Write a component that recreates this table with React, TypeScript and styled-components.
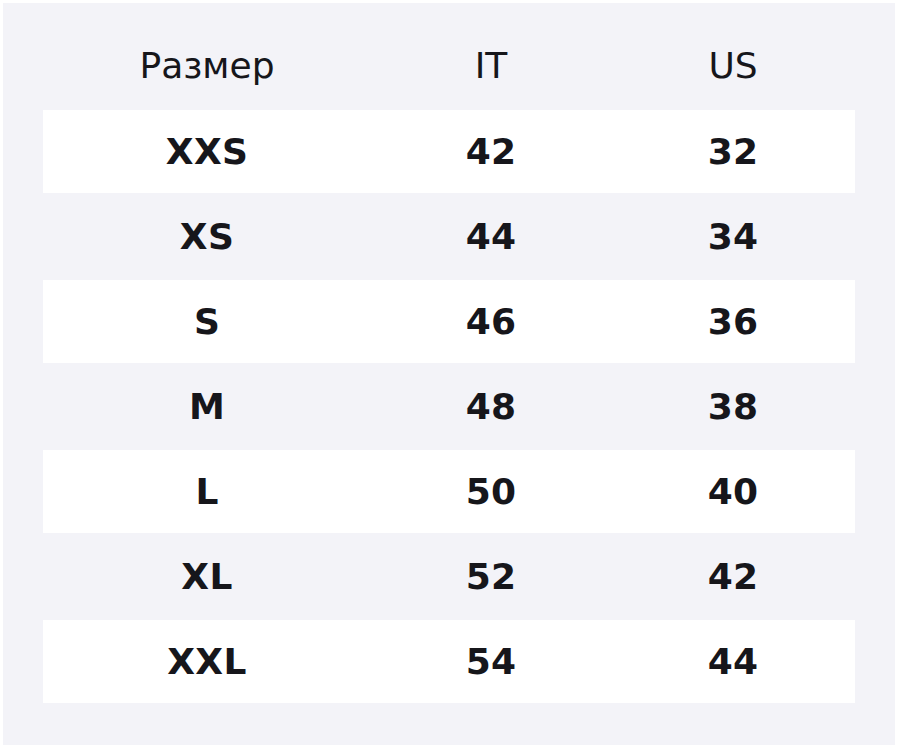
import React from "react"
import styled, { createGlobalStyle } from "styled-components"

const sizes = [
  { size: "XXS", it: 42, us: 32 },
  { size: "XS", it: 44, us: 34 },
  { size: "S", it: 46, us: 36 },
  { size: "M", it: 48, us: 38 },
  { size: "L", it: 50, us: 40 },
  { size: "XL", it: 52, us: 42 },
  { size: "XXL", it: 54, us: 44 },
]

const App = () => {
  return (
    <>
      <GlobalStyle />
      <Panel>
        <Table>
          <HeadRow>
            <HeadCell>Размер</HeadCell>
            <HeadCell>IT</HeadCell>
            <HeadCell>US</HeadCell>
          </HeadRow>
          {sizes.map((row, i) => (
            <Row key={row.size} $white={i % 2 === 0}>
              <Cell>{row.size}</Cell>
              <Cell>{row.it}</Cell>
              <Cell>{row.us}</Cell>
            </Row>
          ))}
        </Table>
      </Panel>
    </>
  )
}

export default App

const GlobalStyle = createGlobalStyle`
  body {
    margin: 0;
    padding: 3px;
    background: #ffffff;
    font-family: "DejaVu Sans", "Noto Sans", sans-serif;
  }
`

const Panel = styled.div`
  width: 892px;
  height: 742px;
  box-sizing: border-box;
  background: #f3f3f8;
  padding: 40px 40px 42px;
`

const Table = styled.div`
  display: grid;
  width: 812px;
`

const HeadRow = styled.div`
  display: grid;
  grid-template-columns: 328px 240px 244px;
  align-items: center;
  height: 67px;
  box-sizing: border-box;
  padding-bottom: 22px;
`

const HeadCell = styled.div`
  text-align: center;
  color: #16161b;
  font-size: 36px;
  line-height: 40px;
  font-weight: 400;
`

const Row = styled.div<{ $white: boolean }>`
  display: grid;
  grid-template-columns: 328px 240px 244px;
  align-items: center;
  height: ${props => (props.$white ? "83px" : "87px")};
  background: ${props => (props.$white ? "#ffffff" : "#f3f3f8")};
`

const Cell = styled.div`
  text-align: center;
  color: #16161b;
  font-size: 36px;
  line-height: 40px;
  font-weight: 700;
  letter-spacing: 0.3px;
`
